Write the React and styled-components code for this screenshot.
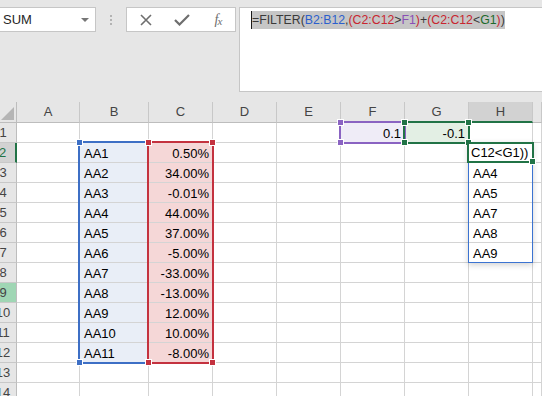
import React from "react";
import styled, { createGlobalStyle, css } from "styled-components";

const GlobalStyle = createGlobalStyle`
  html, body {
    margin: 0;
    padding: 0;
    background: #ffffff;
    overflow: hidden;
  }
`;

const FONT = `"Liberation Sans", Arial, sans-serif`;

const Frame = styled.div`
  width: 542px;
  height: 396px;
  overflow: hidden;
  font-family: ${FONT};
  background: #ffffff;
`;

const Ribbon = styled.div`
  height: 102px;
  box-sizing: border-box;
  padding-top: 7px;
  background: #e6e6e6;
  display: flex;
  align-items: flex-start;
`;

const NameBox = styled.div`
  width: 97px;
  height: 25px;
  margin-left: -1px;
  box-sizing: border-box;
  background: #fff;
  border: 1px solid #c6c6c6;
  display: flex;
  align-items: center;
  justify-content: space-between;
  padding: 0 6px 0 3px;
  font-size: 13px;
  color: #262626;
`;

const Caret = styled.span`
  width: 0;
  height: 0;
  border-left: 4px solid transparent;
  border-right: 4px solid transparent;
  border-top: 4px solid #767676;
`;

const Grip = styled.div`
  width: 30px;
  height: 25px;
  display: flex;
  flex-direction: column;
  align-items: center;
  justify-content: center;
  gap: 2px;
`;

const GripDot = styled.span`
  width: 2px;
  height: 2px;
  background: #b3b3b3;
`;

const ButtonBox = styled.div`
  width: 110px;
  height: 25px;
  box-sizing: border-box;
  background: #fff;
  border: 1px solid #c6c6c6;
  display: grid;
  grid-template-columns: repeat(3, 36px);
  padding-left: 1px;
  align-items: center;
  justify-items: center;
`;

const Fx = styled.span`
  font-family: "Liberation Serif", "Times New Roman", serif;
  font-style: italic;
  font-size: 14px;
  color: #6e6e6e;
  letter-spacing: -1px;

  sub {
    font-size: 11px;
    vertical-align: -1px;
  }
`;

const FormulaBar = styled.div`
  flex: 1;
  height: 85px;
  margin-left: 3px;
  margin-right: -10px;
  box-sizing: border-box;
  background: #fff;
  border: 1px solid #c6c6c6;
  padding: 2px 0 0 11px;
`;

const FormulaText = styled.span`
  display: inline-block;
  background: #c6c6c6;
  font-size: 12.3px;
  line-height: 18px;
  border-left: 1px solid #1a1a1a;
  white-space: nowrap;
`;

const Token = styled.span`
  color: ${({ $c }) => $c};
`;

const Sheet = styled.div`
  display: grid;
  grid-template-columns: 17px 63px 69px repeat(6, 64px) 1fr;
  grid-template-rows: 21px repeat(14, 20px);
  font-size: 13px;
`;

const placed = css`
  grid-row: ${({ $row }) => $row};
  grid-column: ${({ $col }) => $col};
`;

const Corner = styled.div`
  ${placed}
  background: #e6e6e6;
  box-sizing: border-box;
  border-right: 1px solid #bdbdbd;
  border-bottom: 1px solid #bdbdbd;
  display: flex;
  align-items: flex-end;
  justify-content: flex-end;
  padding: 0 2px 2px 0;

  &::after {
    content: "";
    width: 13px;
    height: 13px;
    background: #b5b5b5;
    clip-path: polygon(100% 0, 100% 100%, 0 100%);
  }
`;

const ColHead = styled.div`
  ${placed}
  box-sizing: border-box;
  background: ${({ $active }) => ($active ? "#d2d2d2" : "#e6e6e6")};
  border-right: 1px solid #c8c8c8;
  border-bottom: ${({ $active }) => ($active ? "2px solid #217346" : "1px solid #bdbdbd")};
  color: #444;
  text-align: center;
  line-height: 20px;
`;

const RowHead = styled.div`
  ${placed}
  box-sizing: border-box;
  background: ${({ $tone }) =>
    $tone === "active" ? "#d2d2d2" : $tone === "hover" ? "#9fd6b4" : "#e6e6e6"};
  border-right: ${({ $tone }) => ($tone === "active" ? "2px solid #217346" : "1px solid #bdbdbd")};
  border-bottom: 1px solid #c8c8c8;
  color: ${({ $tone }) => ($tone === "active" ? "#217346" : "#444")};
  display: flex;
  justify-content: center;
  padding-right: 10px;
  overflow: hidden;
  line-height: 19px;
  white-space: nowrap;
`;

const Cell = styled.div`
  ${placed}
  box-sizing: border-box;
  background: ${({ $fill }) => $fill || "#fff"};
  border-right: 1px solid #d4d4d4;
  border-bottom: 1px solid #d4d4d4;
  padding: 2px 3px 0 4px;
  line-height: 17px;
  text-align: ${({ $right }) => ($right ? "right" : "left")};
  color: #000;
  white-space: nowrap;
`;

/* coloured reference ranges sit on the same grid lines as the cells they mark */
const RangeBox = styled.div`
  ${placed}
  position: relative;
  margin: -2px -1px -1px -2px;
  border: 2px solid ${({ $c }) => $c};
  ${({ $open }) => ($open ? "border-right: none;" : "")}
  pointer-events: none;
`;

const Handle = styled.span`
  position: absolute;
  width: 5px;
  height: 5px;
  background: ${({ $c }) => $c};
  outline: 1px solid #fff;
  ${({ $v }) => $v}: -3px;
  ${({ $h }) => $h}: -3px;
`;

const SpillBox = styled.div`
  ${placed}
  margin: -1px 0 0 -1px;
  border: 1px solid #3b73d1;
  box-shadow: 0 2px 6px rgba(0, 0, 0, 0.18);
`;

const EditCell = styled.div`
  ${placed}
  position: relative;
  margin: -1px -1px 0 -2px;
  border: 2px solid #217346;
  background: #fff;
  padding: 0 0 0 2px;
  line-height: 17px;
  color: #000;
  white-space: nowrap;
`;

const COLS = ["A", "B", "C", "D", "E", "F", "G", "H", ""];

const DATA = [
  ["AA1", "0.50%"],
  ["AA2", "34.00%"],
  ["AA3", "-0.01%"],
  ["AA4", "44.00%"],
  ["AA5", "37.00%"],
  ["AA6", "-5.00%"],
  ["AA7", "-33.00%"],
  ["AA8", "-13.00%"],
  ["AA9", "12.00%"],
  ["AA10", "10.00%"],
  ["AA11", "-8.00%"],
];

const SPILL = { 3: "AA4", 4: "AA5", 5: "AA7", 6: "AA8", 7: "AA9" };

const FORMULA = [
  ["=FILTER(", "#3a3a3a"],
  ["B2:B12", "#2b5fcd"],
  [",", "#3a3a3a"],
  ["(", "#c8252f"],
  ["C2:C12", "#c8252f"],
  [">", "#3a3a3a"],
  ["F1", "#8a4fb5"],
  [")", "#c8252f"],
  ["+", "#3a3a3a"],
  ["(", "#c8252f"],
  ["C2:C12", "#c8252f"],
  ["<", "#3a3a3a"],
  ["G1", "#1d6a2b"],
  [")", "#c8252f"],
  [")", "#3a3a3a"],
];

const BLUE = "#3d6fc5";
const RED = "#c4323f";
const PURPLE = "#8a63c2";
const GREEN = "#217346";

const ALL_CORNERS = [
  ["top", "left"],
  ["top", "right"],
  ["bottom", "left"],
  ["bottom", "right"],
];
const LEFT_CORNERS = [
  ["top", "left"],
  ["bottom", "left"],
];

// excel row r -> grid row r + 1, column letter -> grid column
const gr = (r) => r + 1;
const gc = (letter) => COLS.indexOf(letter) + 2;

const RANGES = [
  { key: "b", row: "3 / 14", col: gc("B"), c: BLUE, open: true, corners: LEFT_CORNERS },
  { key: "c", row: "3 / 14", col: gc("C"), c: RED, corners: ALL_CORNERS },
  { key: "f", row: gr(1), col: gc("F"), c: PURPLE, corners: LEFT_CORNERS },
  { key: "g", row: gr(1), col: gc("G"), c: GREEN, corners: ALL_CORNERS },
];

function cellFor(row, col) {
  if (row === 1) {
    if (col === "F") return { text: "0.1", right: true, fill: "#efecf7" };
    if (col === "G") return { text: "-0.1", right: true, fill: "#e3efe4" };
  }
  if (row >= 2 && row <= 12) {
    const d = DATA[row - 2];
    if (col === "B") return { text: d[0], fill: "#e9eef7" };
    if (col === "C") return { text: d[1], right: true, fill: "#f5d7d7" };
  }
  if (col === "H" && SPILL[row]) return { text: SPILL[row] };
  return {};
}

const App = () => {
  const rows = Array.from({ length: 14 }, (_, i) => i + 1);
  return (
    <Frame>
      <GlobalStyle />
      <Ribbon>
        <NameBox>
          SUM
          <Caret />
        </NameBox>
        <Grip>
          <GripDot />
          <GripDot />
          <GripDot />
        </Grip>
        <ButtonBox>
          <svg width="12" height="12" viewBox="0 0 12 12">
            <path d="M1 1 L11 11 M11 1 L1 11" stroke="#6e6e6e" strokeWidth="1.6" />
          </svg>
          <svg width="16" height="12" viewBox="0 0 16 12">
            <path d="M1 6 L5.5 10.5 L15 1" stroke="#6e6e6e" strokeWidth="2.2" fill="none" />
          </svg>
          <Fx>
            f<sub>x</sub>
          </Fx>
        </ButtonBox>
        <FormulaBar>
          <FormulaText>
            {FORMULA.map(([t, c], i) => (
              <Token key={i} $c={c}>
                {t}
              </Token>
            ))}
          </FormulaText>
        </FormulaBar>
      </Ribbon>

      <Sheet>
        <Corner $row={1} $col={1} />
        {COLS.map((c, i) => (
          <ColHead key={i} $row={1} $col={i + 2} $active={c === "H"}>
            {c}
          </ColHead>
        ))}
        {rows.map((r) => (
          <React.Fragment key={r}>
            <RowHead $row={gr(r)} $col={1} $tone={r === 2 ? "active" : r === 9 ? "hover" : ""}>
              <span>{r}</span>
            </RowHead>
            {COLS.map((c, i) => {
              const cell = cellFor(r, c);
              return (
                <Cell key={i} $row={gr(r)} $col={i + 2} $fill={cell.fill} $right={cell.right}>
                  {cell.text}
                </Cell>
              );
            })}
          </React.Fragment>
        ))}

        {RANGES.map((rg) => (
          <RangeBox key={rg.key} $row={rg.row} $col={rg.col} $c={rg.c} $open={rg.open}>
            {rg.corners.map(([v, h]) => (
              <Handle key={v + h} $v={v} $h={h} $c={rg.c} />
            ))}
          </RangeBox>
        ))}

        <SpillBox $row="3 / 9" $col={gc("H")} />
        <EditCell $row={gr(2)} $col={gc("H")}>
          C12&lt;G1))
          <Handle $v="bottom" $h="right" $c={GREEN} />
        </EditCell>
      </Sheet>
    </Frame>
  );
};

export default App;
